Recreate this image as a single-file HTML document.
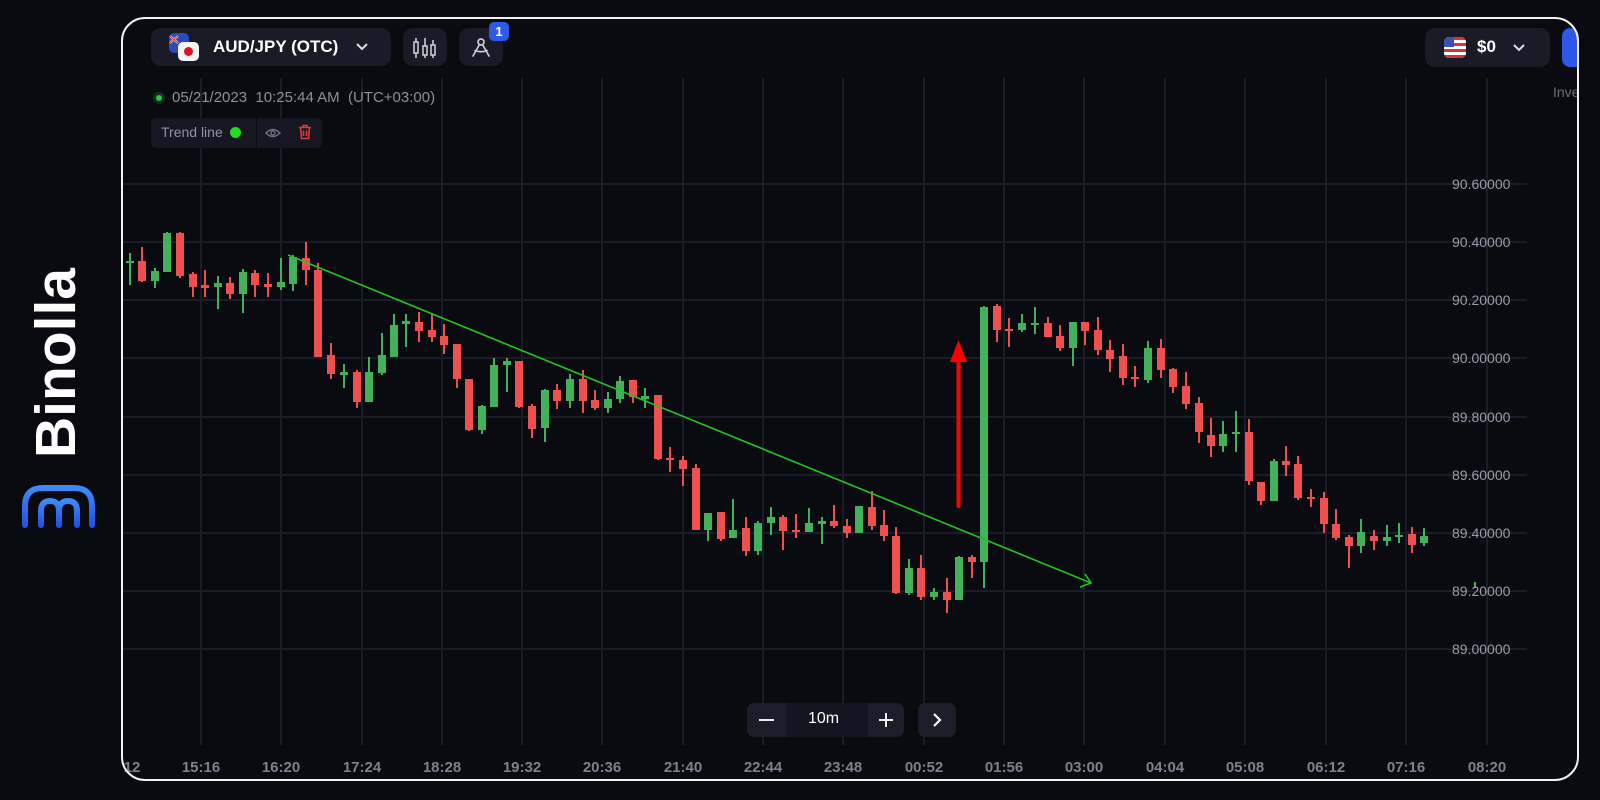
<!DOCTYPE html>
<html><head><meta charset="utf-8"><style>
*{margin:0;padding:0;box-sizing:border-box}
body{width:1600px;height:800px;background:#0a0b10;position:relative;overflow:hidden;font-family:"Liberation Sans",sans-serif}
.frame{position:absolute;left:121px;top:17px;width:1458px;height:764px;border:2px solid #f2f2f2;border-radius:24px;pointer-events:none}
.pill{position:absolute;background:#1a1b26;border-radius:10px}
.t{position:absolute;white-space:nowrap}
.price{position:absolute;left:1452px;color:#9a9ca8;font-size:14px;white-space:nowrap}
.time{position:absolute;top:759px;color:#7e808c;font-size:15px;font-weight:bold;white-space:nowrap;transform:translateX(-50%)}
</style></head><body>

<!-- logo -->
<div class="t" style="left:56px;top:363px;transform:translate(-50%,-50%) rotate(-90deg);color:#fff;font-size:57px;font-weight:bold;letter-spacing:0px">Binolla</div>
<svg style="position:absolute;left:0;top:0" width="120" height="800">
<defs><linearGradient id="lg" x1="0" y1="0" x2="0" y2="1"><stop offset="0" stop-color="#3b8af7"/><stop offset="1" stop-color="#2452e8"/></linearGradient></defs>
<g fill="none" stroke="url(#lg)" stroke-width="6" stroke-linecap="round">
<path d="M25,525 V506 Q25,488 43,488 H74 Q92,488 92,506 V525"/>
<path d="M41,525 V511 Q41,501 50,501 Q59,501 59,511 V525"/>
<path d="M59,525 V511 Q59,501 68,501 Q77,501 77,511 V525"/>
</g></svg>

<!-- chart -->
<svg style="position:absolute;left:0;top:0" width="1600" height="800">
<g stroke="#1b1c29" stroke-width="2">
<path d="M201,78V745M281,78V745M362,78V745M442,78V745M522,78V745M602,78V745M683,78V745M763,78V745M843,78V745M924,78V745M1004,78V745M1084,78V745M1165,78V745M1245,78V745M1326,78V745M1406,78V745M1487,78V745"/>
<path d="M123,184H1527M123,242H1527M123,300H1527M123,358H1527M123,417H1527M123,475H1527M123,533H1527M123,591H1527M123,649H1527"/>
</g>
<g stroke="#43b05c" stroke-width="2">
<path d="M130,253V285M155,268V288M167,232V272M218,276V309M243,269V313M281,258V290M293,255V291M344,364V388M369,357V402M382,333V375M394,314V357M406,314V347M482,405V434M494,358V407M507,358V392M545,389V442M570,374V408M608,392V413M620,376V403M645,388V408M708,513V541M733,499V538M758,521V555M771,507V535M809,508V532M822,517V544M859,506V533M909,559V595M934,588V600M959,556V600M984,306V588M1022,314V332M1035,307V334M1073,322V366M1148,341V383M1223,421V452M1236,411V452M1274,459V501M1361,519V553M1387,525V546M1399,523V543M1424,528V546M1475,582V588"/>
</g>
<g fill="#43b05c">
<rect x="126" y="261" width="8" height="2"/><rect x="151" y="271" width="8" height="10"/><rect x="163" y="233" width="8" height="39"/><rect x="214" y="283" width="8" height="4"/><rect x="239" y="272" width="8" height="22"/><rect x="277" y="282" width="8" height="5"/><rect x="289" y="257" width="8" height="27"/><rect x="340" y="372" width="8" height="3"/><rect x="365" y="372" width="8" height="30"/><rect x="378" y="355" width="8" height="18"/><rect x="390" y="325" width="8" height="32"/><rect x="402" y="321" width="8" height="3"/><rect x="478" y="406" width="8" height="24"/><rect x="490" y="365" width="8" height="42"/><rect x="503" y="361" width="8" height="4"/><rect x="541" y="390" width="8" height="38"/><rect x="566" y="379" width="8" height="22"/><rect x="604" y="399" width="8" height="9"/><rect x="616" y="381" width="8" height="18"/><rect x="641" y="396" width="8" height="3"/><rect x="704" y="513" width="8" height="17"/><rect x="729" y="530" width="8" height="8"/><rect x="754" y="523" width="8" height="28"/><rect x="767" y="517" width="8" height="6"/><rect x="805" y="523" width="8" height="9"/><rect x="818" y="521" width="8" height="3"/><rect x="855" y="506" width="8" height="27"/><rect x="905" y="568" width="8" height="25"/><rect x="930" y="592" width="8" height="5"/><rect x="955" y="557" width="8" height="43"/><rect x="980" y="307" width="8" height="255"/><rect x="1018" y="323" width="8" height="7"/><rect x="1031" y="323" width="8" height="2"/><rect x="1069" y="322" width="8" height="26"/><rect x="1144" y="348" width="8" height="32"/><rect x="1219" y="434" width="8" height="12"/><rect x="1232" y="432" width="8" height="2"/><rect x="1270" y="461" width="8" height="40"/><rect x="1357" y="532" width="8" height="14"/><rect x="1383" y="537" width="8" height="4"/><rect x="1395" y="535" width="8" height="2"/><rect x="1420" y="536" width="8" height="7"/>
</g>
<g stroke="#f04f4f" stroke-width="2">
<path d="M142,247V282M180,232V278M193,272V297M205,270V297M230,277V299M255,270V297M268,273V297M306,242V285M318,263V357M331,343V379M357,370V408M419,312V342M432,313V342M444,324V354M457,344V388M469,379V431M519,361V408M532,404V438M557,384V409M583,370V413M595,390V410M633,380V403M658,395V460M670,447V472M683,456V486M696,464V530M721,512V541M746,517V556M783,515V550M796,514V538M834,505V528M847,519V538M872,491V530M884,510V541M896,527V594M921,555V600M947,578V613M972,555V578M997,304V342M1009,318V347M1048,317V337M1060,325V351M1085,322V345M1098,317V355M1110,340V372M1123,344V385M1135,366V387M1161,339V378M1173,368V393M1186,372V409M1199,397V443M1211,418V457M1249,419V485M1261,482V505M1286,446V476M1298,456V500M1311,489V507M1324,492V533M1336,509V540M1349,535V568M1374,530V550M1412,527V553"/>
</g>
<g fill="#f04f4f">
<rect x="138" y="261" width="8" height="20"/><rect x="176" y="233" width="8" height="43"/><rect x="189" y="274" width="8" height="13"/><rect x="201" y="285" width="8" height="3"/><rect x="226" y="283" width="8" height="11"/><rect x="251" y="273" width="8" height="12"/><rect x="264" y="284" width="8" height="3"/><rect x="302" y="258" width="8" height="12"/><rect x="314" y="270" width="8" height="87"/><rect x="327" y="355" width="8" height="19"/><rect x="353" y="372" width="8" height="30"/><rect x="415" y="322" width="8" height="9"/><rect x="428" y="330" width="8" height="7"/><rect x="440" y="336" width="8" height="9"/><rect x="453" y="344" width="8" height="35"/><rect x="465" y="379" width="8" height="51"/><rect x="515" y="361" width="8" height="46"/><rect x="528" y="406" width="8" height="23"/><rect x="553" y="390" width="8" height="11"/><rect x="579" y="379" width="8" height="22"/><rect x="591" y="400" width="8" height="8"/><rect x="629" y="380" width="8" height="17"/><rect x="654" y="395" width="8" height="64"/><rect x="666" y="458" width="8" height="2"/><rect x="679" y="460" width="8" height="9"/><rect x="692" y="468" width="8" height="62"/><rect x="717" y="512" width="8" height="27"/><rect x="742" y="528" width="8" height="23"/><rect x="779" y="517" width="8" height="14"/><rect x="792" y="530" width="8" height="2"/><rect x="830" y="521" width="8" height="5"/><rect x="843" y="526" width="8" height="7"/><rect x="868" y="507" width="8" height="19"/><rect x="880" y="525" width="8" height="11"/><rect x="892" y="536" width="8" height="57"/><rect x="917" y="568" width="8" height="29"/><rect x="943" y="592" width="8" height="8"/><rect x="968" y="557" width="8" height="5"/><rect x="993" y="306" width="8" height="24"/><rect x="1005" y="329" width="8" height="2"/><rect x="1044" y="323" width="8" height="14"/><rect x="1056" y="336" width="8" height="12"/><rect x="1081" y="322" width="8" height="9"/><rect x="1094" y="330" width="8" height="20"/><rect x="1106" y="350" width="8" height="9"/><rect x="1119" y="356" width="8" height="22"/><rect x="1131" y="377" width="8" height="2"/><rect x="1157" y="348" width="8" height="22"/><rect x="1169" y="369" width="8" height="18"/><rect x="1182" y="386" width="8" height="18"/><rect x="1195" y="403" width="8" height="29"/><rect x="1207" y="435" width="8" height="11"/><rect x="1245" y="432" width="8" height="49"/><rect x="1257" y="482" width="8" height="19"/><rect x="1282" y="461" width="8" height="4"/><rect x="1294" y="464" width="8" height="34"/><rect x="1307" y="497" width="8" height="2"/><rect x="1320" y="498" width="8" height="26"/><rect x="1332" y="524" width="8" height="14"/><rect x="1345" y="537" width="8" height="9"/><rect x="1370" y="536" width="8" height="5"/><rect x="1408" y="534" width="8" height="11"/>
</g>
<!-- trend line -->
<g stroke="#22c322" stroke-width="1.6" fill="none">
<path d="M288,255 L1091,583"/>
<path d="M1085,574 L1091,583 L1080,587"/>
</g>
<!-- red arrow -->
<path d="M958.5,506 V358" stroke="#ff0000" stroke-width="4" stroke-linecap="round"/>
<path d="M950,362 L958.5,340 L967,362 Z" fill="#ff0000"/>
</svg>

<!-- prices -->
<div class="price" style="top:176px">90.60000</div>
<div class="price" style="top:234px">90.40000</div>
<div class="price" style="top:292px">90.20000</div>
<div class="price" style="top:350px">90.00000</div>
<div class="price" style="top:409px">89.80000</div>
<div class="price" style="top:467px">89.60000</div>
<div class="price" style="top:525px">89.40000</div>
<div class="price" style="top:583px">89.20000</div>
<div class="price" style="top:641px">89.00000</div>

<!-- times -->
<div class="time" style="left:132px">12</div>
<div class="time" style="left:201px">15:16</div>
<div class="time" style="left:281px">16:20</div>
<div class="time" style="left:362px">17:24</div>
<div class="time" style="left:442px">18:28</div>
<div class="time" style="left:522px">19:32</div>
<div class="time" style="left:602px">20:36</div>
<div class="time" style="left:683px">21:40</div>
<div class="time" style="left:763px">22:44</div>
<div class="time" style="left:843px">23:48</div>
<div class="time" style="left:924px">00:52</div>
<div class="time" style="left:1004px">01:56</div>
<div class="time" style="left:1084px">03:00</div>
<div class="time" style="left:1165px">04:04</div>
<div class="time" style="left:1245px">05:08</div>
<div class="time" style="left:1326px">06:12</div>
<div class="time" style="left:1406px">07:16</div>
<div class="time" style="left:1487px">08:20</div>

<!-- top bar -->
<div class="pill" style="left:151px;top:28px;width:240px;height:38px"></div>
<svg style="position:absolute;left:168px;top:32px" width="34" height="30">
<rect x="1" y="1" width="20" height="20" rx="5" fill="#2a4bb8"/>
<path d="M2,4 L10,11 M10,4 L2,11" stroke="#fff" stroke-width="2"/><path d="M2,4 L10,11 M10,4 L2,11" stroke="#d22" stroke-width="1"/>
<rect x="10" y="10" width="21" height="19" rx="5" fill="#f4f4f4"/>
<circle cx="20.5" cy="19.5" r="4.5" fill="#e0101e"/>
</svg>
<div class="t" style="left:213px;top:37px;color:#fff;font-size:17px;font-weight:bold">AUD/JPY (OTC)</div>
<svg style="position:absolute;left:355px;top:42px" width="14" height="10"><path d="M2,2 L7,7 L12,2" stroke="#ddd" stroke-width="2" fill="none"/></svg>

<div class="pill" style="left:403px;top:28px;width:44px;height:38px"></div>
<svg style="position:absolute;left:412px;top:36px" width="26" height="24" fill="none" stroke="#c9cad2" stroke-width="1.6">
<path d="M4,2V22M13,2V22M21,4V22"/><rect x="2" y="6" width="4" height="11" fill="#1a1b26"/><rect x="11" y="10" width="4" height="9" fill="#1a1b26"/><rect x="19" y="9" width="4" height="10" fill="#1a1b26"/>
</svg>
<div class="pill" style="left:459px;top:28px;width:44px;height:38px"></div>
<svg style="position:absolute;left:469px;top:35px" width="24" height="24" fill="none" stroke="#c9cad2" stroke-width="1.7" stroke-linecap="round">
<circle cx="12" cy="7" r="3"/><path d="M10.5,9.5 L4,21 M13.5,9.5 L20,21 M6,15.5 Q12,18 18,15.5"/>
</svg>
<div style="position:absolute;left:489px;top:22px;width:20px;height:19px;background:#2f5ae8;border-radius:5px;color:#fff;font-size:13px;font-weight:bold;text-align:center;line-height:19px">1</div>

<div class="t" style="left:153px;top:92px;width:12px;height:12px;border-radius:6px;background:#103018"></div>
<div class="t" style="left:156px;top:95px;width:6px;height:6px;border-radius:3px;background:#2fbf4a"></div>
<div class="t" style="left:172px;top:89px;color:#8d8f9b;font-size:15px">05/21/2023&nbsp; 10:25:44 AM&nbsp; (UTC+03:00)</div>

<div class="pill" style="left:151px;top:118px;width:171px;height:30px;border-radius:5px;background:#161722"></div>
<div class="t" style="left:256px;top:118px;width:1px;height:30px;background:#0a0b10"></div>
<div class="t" style="left:161px;top:124px;color:#8d93a8;font-size:14px">Trend line</div>
<div class="t" style="left:230px;top:127px;width:11px;height:11px;border-radius:6px;background:#22dd22"></div>
<svg style="position:absolute;left:265px;top:127px" width="16" height="12" fill="none" stroke="#6e707c" stroke-width="1.4"><path d="M1,6 Q8,-1 15,6 Q8,13 1,6Z"/><circle cx="8" cy="6" r="2"/></svg>
<svg style="position:absolute;left:298px;top:124px" width="14" height="16" fill="none" stroke="#e03a3a" stroke-width="1.6"><path d="M1,3.5H13M5,3.5V1.5H9V3.5M2.5,3.5L3.5,14.5H10.5L11.5,3.5M5.5,6.5V12M8.5,6.5V12"/></svg>

<div class="pill" style="left:1425px;top:28px;width:125px;height:39px"></div>
<svg style="position:absolute;left:1444px;top:37px" width="22" height="21"><defs><clipPath id="c"><rect width="22" height="21" rx="5"/></clipPath></defs><g clip-path="url(#c)"><rect width="22" height="21" fill="#fff"/><path d="M0,1.5H22M0,7.5H22M0,13.5H22M0,19.5H22" stroke="#d8323a" stroke-width="3"/><rect width="10" height="10" fill="#3654b0"/></g></svg>
<div class="t" style="left:1477px;top:37px;color:#fff;font-size:17px;font-weight:bold">$0</div>
<svg style="position:absolute;left:1512px;top:43px" width="14" height="10"><path d="M2,2 L7,7 L12,2" stroke="#ddd" stroke-width="2" fill="none"/></svg>
<div style="position:absolute;left:1562px;top:28px;width:16px;height:39px;background:#2f56e6;border-radius:10px 10px 0 10px"></div>
<div class="t" style="left:1553px;top:84px;color:#6a6c76;font-size:14px;width:24px;overflow:hidden">Inve</div>

<!-- zoom controls -->
<div class="pill" style="left:747px;top:703px;width:157px;height:34px;border-radius:7px;background:#141520"></div>
<div class="pill" style="left:747px;top:703px;width:40px;height:34px;border-radius:7px 0 0 7px;background:#1c1d29"></div>
<div class="pill" style="left:868px;top:703px;width:36px;height:34px;border-radius:0 7px 7px 0;background:#1c1d29"></div>
<div class="t" style="left:759px;top:719px;width:15px;height:2px;background:#eee"></div>
<div class="t" style="left:808px;top:710px;color:#fff;font-size:16px">10m</div>
<div class="t" style="left:879px;top:719px;width:14px;height:2px;background:#eee"></div>
<div class="t" style="left:885px;top:713px;width:2px;height:14px;background:#eee"></div>
<div class="pill" style="left:918px;top:703px;width:38px;height:34px;border-radius:7px;background:#1c1d29"></div>
<svg style="position:absolute;left:931px;top:712px" width="12" height="16"><path d="M3,2 L9,8 L3,14" stroke="#fff" stroke-width="2.2" fill="none"/></svg>

<div class="frame"></div>
</body></html>
